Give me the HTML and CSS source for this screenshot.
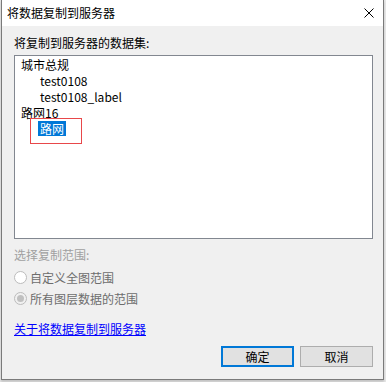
FILE: index.html
```html
<!DOCTYPE html>
<html>
<head>
<meta charset="utf-8">
<link rel="stylesheet" href="styles.css">
</head>
<body>
<div class="window">
  <div class="titlebar">
    <span class="title">将数据复制到服务器</span>
    <svg class="close" width="10" height="10" viewBox="0 0 10 10"><path d="M0.5 0.5 L9.5 9.5 M9.5 0.5 L0.5 9.5" stroke="#000" stroke-width="1" fill="none"/></svg>
  </div>
  <div class="content">
    <div class="label">将复制到服务器的数据集:</div>
    <div class="listbox">
      <div class="item">城市总规</div>
      <div class="item child">test0108</div>
      <div class="item child">test0108_label</div>
      <div class="item">路网16</div>
      <div class="item"><span class="selected">路网</span></div>
      <div class="annot"></div>
    </div>
    <div class="label disabled section">选择复制范围:</div>
    <div class="radios">
      <div class="radio-row"><span class="radio"></span><span class="rtext">自定义全图范围</span></div>
      <div class="radio-row"><span class="radio checked"></span><span class="rtext">所有图层数据的范围</span></div>
    </div>
    <a class="link" href="#">关于将数据复制到服务器</a>
    <div class="buttons">
      <div class="btn default">确定</div>
      <div class="btn">取消</div>
    </div>
  </div>
</div>
</body>
</html>
```
FILE: styles.css
```css
html, body {
  margin: 0;
  padding: 0;
}
body {
  width: 386px;
  height: 382px;
  background: #e6e6e6;
  font-family: "Noto Sans CJK SC", "Microsoft YaHei", sans-serif;
  font-size: 12px;
  color: #000;
  overflow: hidden;
}
.window {
  margin-left: 1px;
  width: 383px;
  height: 380px;
  box-sizing: border-box;
  border: 1px solid #7a7a7a;
  border-top: none;
  background: #f0f0f0;
  box-shadow: 0 2px 2px rgba(0,0,0,0.15);
  display: flex;
  flex-direction: column;
}
.titlebar {
  height: 26px;
  background: #fff;
  display: flex;
  align-items: center;
  justify-content: space-between;
  padding-left: 5px;
  padding-right: 9px;
}
.title {
  line-height: 16px;
  margin-top: -1px;
}
.close {
  display: block;
}
.content {
  padding: 9px 10px 0 12px;
  display: flex;
  flex-direction: column;
}
.label {
  line-height: 16px;
}
.disabled {
  color: #a0a0a0;
}
.listbox {
  position: relative;
  margin-top: 4px;
  width: 359px;
  height: 184px;
  box-sizing: border-box;
  border: 1px solid #828790;
  background: #fff;
  padding: 1px 0 0 6px;
}
.item {
  height: 16px;
  line-height: 16px;
  white-space: nowrap;
}
.item.child {
  padding-left: 19px;
}
.selected {
  display: inline-block;
  margin-left: 17px;
  padding: 0 2px;
  height: 15px;
  line-height: 15px;
  background: #0078d7;
  color: #fff;
  vertical-align: top;
}
.annot {
  position: absolute;
  left: 15px;
  top: 62px;
  width: 52px;
  height: 26px;
  box-sizing: border-box;
  border: 1px solid #e8474a;
}
.section {
  margin-top: 8px;
}
.radios {
  margin-top: 4px;
  display: flex;
  flex-direction: column;
}
.radio-row {
  height: 21px;
  display: flex;
  align-items: center;
}
.radio {
  width: 13px;
  height: 13px;
  box-sizing: border-box;
  border: 1px solid #bcbcbc;
  border-radius: 50%;
  background: #fff;
  display: flex;
  align-items: center;
  justify-content: center;
}
.radio.checked {
  background: #f0f0f0;
}
.radio.checked::after {
  content: "";
  width: 7px;
  height: 7px;
  border-radius: 50%;
  background: #c0c0c0;
}
.rtext {
  margin-left: 3px;
  color: #6d6d6d;
  line-height: 16px;
}
.link {
  margin-top: 12px;
  line-height: 16px;
  color: #0000ff;
  text-decoration: underline;
  align-self: flex-start;
}
.buttons {
  margin-top: 9px;
  display: flex;
  justify-content: flex-end;
  gap: 6px;
}
.btn {
  width: 73px;
  height: 21px;
  box-sizing: border-box;
  border: 1px solid #adadad;
  background: #e1e1e1;
  display: flex;
  align-items: center;
  justify-content: center;
  line-height: 16px;
}
.btn.default {
  border: 2px solid #0078d7;
}
```
